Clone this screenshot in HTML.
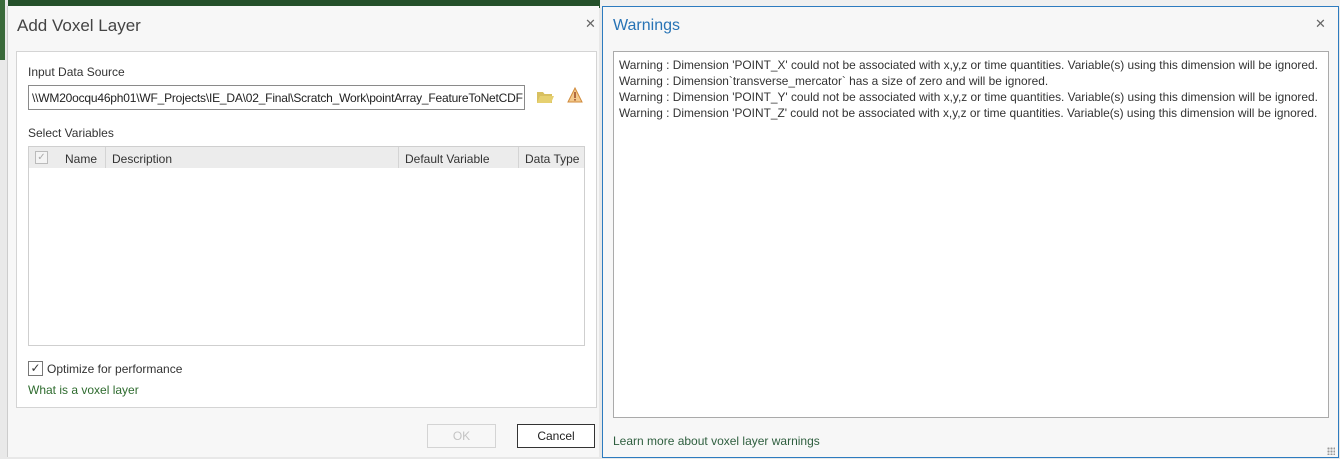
<!DOCTYPE html>
<html><head><meta charset="utf-8"><style>
*{margin:0;padding:0;box-sizing:border-box}
body{width:1340px;height:459px;overflow:hidden;background:#e8e8e8;font-family:"Liberation Sans",sans-serif;position:relative;font-size:12px;color:#222}
.abs{position:absolute}
</style></head><body>
<div class="abs" style="left:0;top:0;width:600px;height:8px;background:#24502a"></div>
<div class="abs" style="left:0;top:0;width:8px;height:459px;background:#e9e9e9"></div>
<div class="abs" style="left:0;top:0;width:5px;height:60px;background:#3a6a3a"></div>
<div class="abs" style="left:600px;top:0;width:740px;height:8px;background:#f0f0f0"></div>

<div class="abs" style="left:7px;top:6px;width:592px;height:451px;background:#f7f7f7;border-left:1px solid #ccc">
  <div class="abs" style="left:9px;top:10px;font-size:17px;color:#444">Add Voxel Layer</div>
  <div class="abs" style="left:577px;top:10px;font-size:13px;color:#666">✕</div>
  <div class="abs" style="left:8px;top:45px;width:581px;height:357px;background:#fff;border:1px solid #d4d4d4">
    <div class="abs" style="left:11px;top:13px;color:#333">Input Data Source</div>
    <div class="abs" style="left:11px;top:33px;width:497px;height:25px;border:1px solid #8a8a8a;padding:5px 0 0 3px;white-space:nowrap;overflow:hidden;color:#222;letter-spacing:-0.2px">\\WM20ocqu46ph01\WF_Projects\IE_DA\02_Final\Scratch_Work\pointArray_FeatureToNetCDF</div>
    <svg class="abs" style="left:519px;top:37px" width="18" height="15"><path d="M1 3h6l1.5 2H16v9H1z" fill="#d8c060"/><path d="M1 14l3-7h14l-3 7z" fill="#e6d070"/></svg>
    <svg class="abs" style="left:550px;top:35px" width="16" height="16"><path d="M8 1L15 15H1z" fill="#f3c98c" stroke="#d08a3a"/><rect x="7.2" y="5" width="1.6" height="6" fill="#a0522d"/><rect x="7.2" y="12" width="1.6" height="1.6" fill="#a0522d"/></svg>
    <div class="abs" style="left:11px;top:74px;color:#333">Select Variables</div>
    <div class="abs" style="left:11px;top:94px;width:557px;height:200px;border:1px solid #cfcfcf">
      <div class="abs" style="left:0;top:0;width:555px;height:21px;background:#ececec;color:#333">
        <div class="abs" style="left:6px;top:4px;width:13px;height:13px;border:1px solid #bbb;background:#f4f4f4;color:#aaa;font-size:10px;line-height:11px;text-align:center">✓</div>
        <div class="abs" style="left:36px;top:5px">Name</div>
        <div class="abs" style="left:76px;top:0;width:1px;height:21px;background:#d4d4d4"></div>
        <div class="abs" style="left:83px;top:5px">Description</div>
        <div class="abs" style="left:369px;top:0;width:1px;height:21px;background:#d4d4d4"></div>
        <div class="abs" style="left:376px;top:5px">Default Variable</div>
        <div class="abs" style="left:489px;top:0;width:1px;height:21px;background:#d4d4d4"></div>
        <div class="abs" style="left:496px;top:5px">Data Type</div>
      </div>
    </div>
    <div class="abs" style="left:11px;top:309px;width:15px;height:15px;border:1px solid #777;color:#333;font-size:12px;line-height:13px;text-align:center">✓</div>
    <div class="abs" style="left:30px;top:310px;color:#333">Optimize for performance</div>
    <div class="abs" style="left:11px;top:331px;color:#2e6b2e">What is a voxel layer</div>
  </div>
  <div class="abs" style="left:419px;top:418px;width:69px;height:24px;border:1px solid #d4d4d4;color:#c4c4c4;text-align:center;line-height:22px">OK</div>
  <div class="abs" style="left:509px;top:418px;width:78px;height:24px;border:1px solid #333;background:#fff;text-align:center;line-height:22px;color:#222">Cancel</div>
</div>

<div class="abs" style="left:602px;top:6px;width:737px;height:452px;background:#f7f7f7;border:1px solid #2d7bbf">
  <div class="abs" style="left:10px;top:10px;font-size:16px;color:#2773b5">Warnings</div>
  <div class="abs" style="left:712px;top:9px;font-size:13px;color:#666">✕</div>
  <div class="abs" style="left:10px;top:44px;width:716px;height:367px;background:#fff;border:1px solid #aaa;padding:5px 0 0 5px;line-height:16px;color:#333;white-space:nowrap;font-size:11.9px">
    Warning : Dimension 'POINT_X' could not be associated with x,y,z or time quantities. Variable(s) using this dimension will be ignored.<br>
    Warning : Dimension`transverse_mercator` has a size of zero and will be ignored.<br>
    Warning : Dimension 'POINT_Y' could not be associated with x,y,z or time quantities. Variable(s) using this dimension will be ignored.<br>
    Warning : Dimension 'POINT_Z' could not be associated with x,y,z or time quantities. Variable(s) using this dimension will be ignored.
  </div>
  <div class="abs" style="left:10px;top:427px;color:#2e5e3e">Learn more about voxel layer warnings</div>
  <div class="abs" style="left:724px;top:440px;width:8px;height:8px;background:radial-gradient(circle,#999 1px,transparent 1.2px) 0 0/3px 3px"></div>
</div>
</body></html>
